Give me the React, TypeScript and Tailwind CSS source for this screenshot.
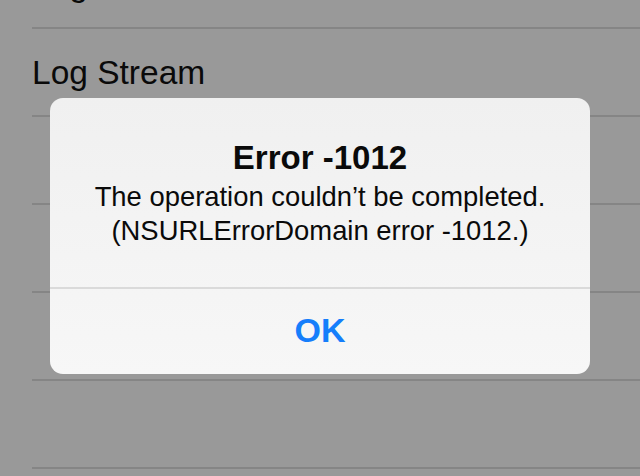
const rows = ["Log", "Log Stream", "", "", "", ""];

export default function App() {
  return (
    <div
      className="relative w-[640px] h-[476px] overflow-hidden bg-[#999999]"
      style={{ fontFamily: '"Liberation Sans", Arial, sans-serif' }}
    >
      {/* table behind the dimmed overlay */}
      <div className="mt-[-59px] flex flex-col">
        {rows.map((label, i) => (
          <div key={i} className="pl-[32px]">
            <div className="h-[88px] flex items-center pt-[2px] border-b-2 border-[#858585] text-[33.5px] text-[#0a0a0a]">
              {label}
            </div>
          </div>
        ))}
      </div>

      {/* alert */}
      <div className="absolute left-[50px] top-[98px] w-[540px] h-[276px] rounded-[13px] overflow-hidden bg-gradient-to-b from-[#f0f0f0] to-[#f7f7f7] flex flex-col">
        <div className="h-[189px] flex flex-col items-center pt-[40px] text-[#0a0a0a]">
          <div className="text-[33px] font-bold leading-[40px]">Error -1012</div>
          <div className="text-[27.4px] leading-[34px] text-center mt-[2px]">
            The operation couldn’t be completed.
            <br />
            (NSURLErrorDomain error -1012.)
          </div>
        </div>
        <div className="h-[2px] bg-[#dadada]" />
        <div className="flex-1 flex items-center justify-center text-[34px] text-[#157efb] font-bold pb-[2px]">
          OK
        </div>
      </div>
    </div>
  );
}
